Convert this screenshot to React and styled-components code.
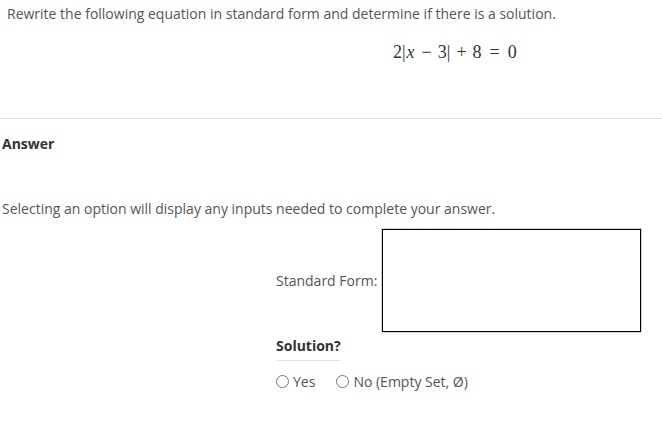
import React from 'react';
import styled, { createGlobalStyle } from 'styled-components';

const GlobalStyle = createGlobalStyle`
  html, body {
    margin: 0;
    padding: 0;
    background: #fff;
  }
  body {
    font-family: 'Open Sans', 'Liberation Sans', sans-serif;
    font-size: 14px;
    color: #555;
  }
`;

const Page = styled.div`
  width: 662px;
  height: 424px;
  overflow: hidden;
`;

const Question = styled.section`
  padding: 4px 0 0 7px;
  border-bottom: 1px solid #e0e0e0;
  box-sizing: border-box;
  height: 119px;
`;

const Prompt = styled.p`
  margin: 0;
  line-height: 19px;
`;

const Equation = styled.div`
  margin-top: 19px;
  padding-left: 386px;
  font-family: 'Liberation Serif', 'Times New Roman', serif;
  font-size: 18px;
  color: #333;
  line-height: 20px;
  white-space: nowrap;
`;

const Var = styled.i`
  font-style: italic;
  margin: 0 1px;
`;

const Op = styled.span`
  margin: 0 ${(p) => p.space}px;
`;

const AnswerSection = styled.section`
  padding: 15px 0 0 2px;
`;

const AnswerTitle = styled.h3`
  margin: 0;
  font-size: 14px;
  font-weight: 700;
  color: #333;
  line-height: 19px;
`;

const Hint = styled.p`
  margin: 46px 0 0;
  line-height: 19px;
`;

const Form = styled.div`
  margin: 10px 0 0 274px;
  display: flex;
  flex-direction: column;
`;

const FieldRow = styled.div`
  display: flex;
  align-items: center;
`;

const Label = styled.label`
  line-height: 19px;
  margin-right: 4px;
`;

const AnswerBox = styled.div`
  width: 257px;
  height: 101px;
  border: 1px solid #000;
  outline: 1px solid #d4d4d4;
  margin: 1px;
  background: #fff;
`;

const Legend = styled.div`
  align-self: flex-start;
  margin-top: 3px;
  padding-bottom: 5px;
  border-bottom: 1px solid #e5e5e5;
  font-weight: 700;
  color: #333;
  line-height: 19px;
`;

const Options = styled.div`
  display: flex;
  align-items: center;
  gap: 21px;
  margin-top: 11px;
`;

const Option = styled.label`
  display: flex;
  align-items: center;
  gap: 4px;
  line-height: 19px;
`;

const Radio = styled.span`
  width: 13px;
  height: 13px;
  border: 1px solid #777;
  border-radius: 50%;
  box-sizing: border-box;
`;

export default function App() {
  return (
    <Page>
      <GlobalStyle />
      <Question>
        <Prompt>Rewrite the following equation in standard form and determine if there is a solution.</Prompt>
        <Equation>
          2|<Var>x</Var>
          <Op space={6}>−</Op>3|
          <Op space={6}>+</Op>8
          <Op space={8}>=</Op>0
        </Equation>
      </Question>
      <AnswerSection>
        <AnswerTitle>Answer</AnswerTitle>
        <Hint>Selecting an option will display any inputs needed to complete your answer.</Hint>
        <Form>
          <FieldRow>
            <Label>Standard Form:</Label>
            <AnswerBox />
          </FieldRow>
          <Legend>Solution?</Legend>
          <Options>
            <Option>
              <Radio />
              Yes
            </Option>
            <Option>
              <Radio />
              No (Empty Set, Ø)
            </Option>
          </Options>
        </Form>
      </AnswerSection>
    </Page>
  );
}
